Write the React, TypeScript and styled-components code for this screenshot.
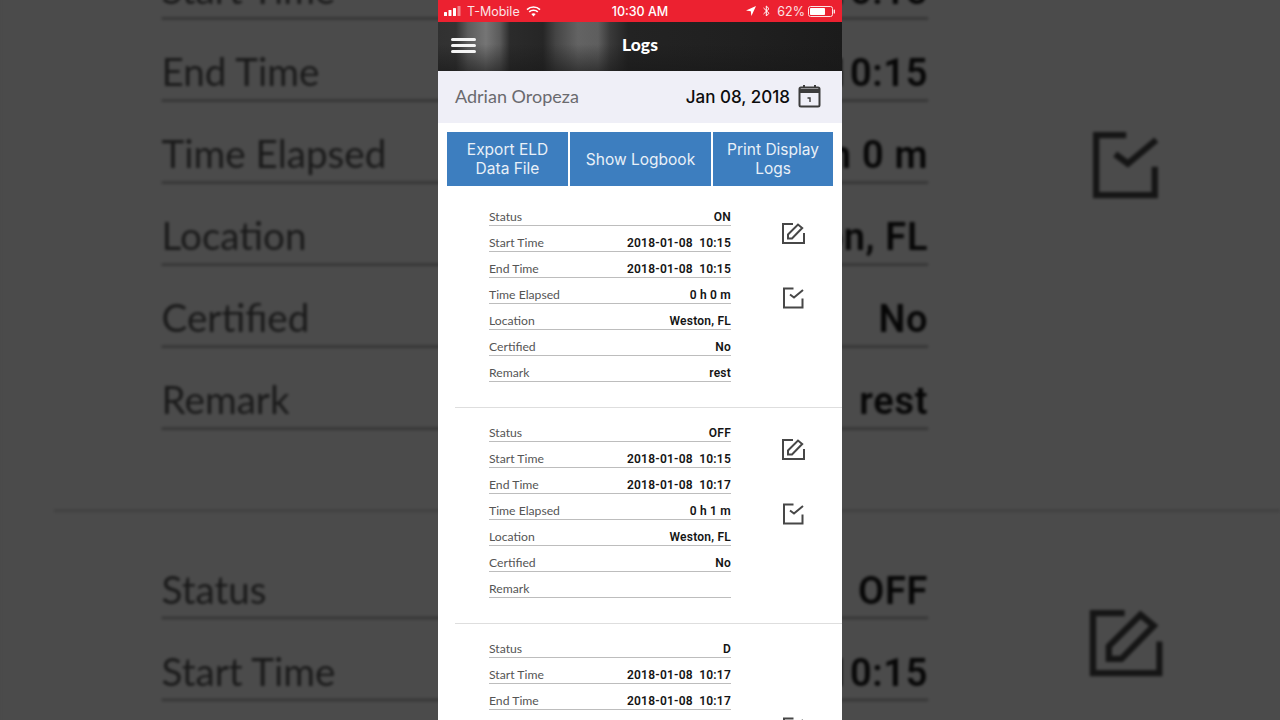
import React from "react";
import styled, { createGlobalStyle } from "styled-components";

const Global = createGlobalStyle`
  html, body { margin: 0; padding: 0; background: #fff; }
  body { width: 1280px; height: 720px; overflow: hidden; }
`;

const Stage = styled.div`
  position: relative;
  width: 1280px;
  height: 720px;
  overflow: hidden;
  display: flex;
  justify-content: center;
  background: #4b4b4b;
`;

const Backdrop = styled.div`
  position: absolute;
  left: 0;
  top: 0;
  width: 404px;
  transform-origin: 0 0;
  transform: translateY(-775px) scale(3.168, 3.155);
  filter: brightness(0.295) blur(0.45px);
`;

const Phone = styled.div`
  position: relative;
  width: 404px;
  height: 720px;
  overflow: hidden;
  background: #fff;
`;

const Screen = styled.div`
  width: 404px;
  display: flex;
  flex-direction: column;
  background: #fff;
`;

const StatusBar = styled.div`
  height: 22px;
  background: #ec2130;
  display: grid;
  grid-template-columns: 1fr auto 1fr;
  align-items: center;
  padding: 0 6px;
  box-sizing: border-box;
  color: #fbe3e5;
  font: 400 12.5px Inter, Roboto, sans-serif;
`;

const StatusLeft = styled.div`
  display: flex;
  align-items: center;
  gap: 6px;
`;

const StatusRight = styled.div`
  display: flex;
  align-items: center;
  justify-content: flex-end;
  gap: 7px;
`;

const Clock = styled.span`
  color: #fff;
  font-weight: 500;
`;

const Percent = styled.span`
  margin-right: -4px;
`;

const Header = styled.header`
  height: 49px;
  display: grid;
  grid-template-columns: 1fr auto 1fr;
  align-items: center;
  padding: 0 13px 3px;
  box-sizing: border-box;
  color: #fff;
  background:
    linear-gradient(180deg, rgba(28, 28, 28, 0) 45%, rgba(24, 24, 24, 0.6) 100%),
    linear-gradient(
      90deg,
      #313131 0,
      #333 18px,
      #5c5c5c 30px,
      #757575 48px,
      #5a5a5a 62px,
      #2b2b2b 72px,
      #262626 105px,
      #454545 118px,
      #636363 140px,
      #5e5e5e 160px,
      #3a3a3a 172px,
      #232323 190px,
      #202020 300px,
      #1b1b1b 404px
    );
`;

const Hamburger = styled.div`
  width: 25px;
  display: flex;
  flex-direction: column;
  gap: 3px;
`;

const HamburgerBar = styled.span`
  height: 3px;
  border-radius: 1.5px;
  background: #f4f4f4;
`;

const Title = styled.h1`
  margin: 0;
  padding-bottom: 2px;
  font: 900 17.5px Lato, sans-serif;
`;

const DateBar = styled.div`
  height: 52px;
  background: #efeff7;
  display: flex;
  align-items: center;
  justify-content: space-between;
  padding: 0 21px 2px 17px;
  box-sizing: border-box;
`;

const DriverName = styled.span`
  font: 400 18px Lato, sans-serif;
  color: #6a6a6e;
`;

const DateGroup = styled.div`
  display: flex;
  align-items: center;
  gap: 8px;
`;

const DateText = styled.span`
  padding-top: 2px;
  font: 500 17px Inter, sans-serif;
  color: #0c0c0c;
`;

const ButtonRow = styled.div`
  display: grid;
  grid-template-columns: 121px 141px 120px;
  gap: 2px;
  height: 54px;
  margin: 9px 9px 0;
`;

const ActionButton = styled.button`
  border: 0;
  padding: 0 10px;
  background: #3d7ebf;
  color: #e8f0f8;
  font: 400 15.5px/19px Inter, sans-serif;
  text-align: center;
`;

const Record = styled.section<{ $first?: boolean }>`
  display: flex;
  height: ${(p) => (p.$first ? "221px" : "215px")};
  box-sizing: border-box;
  padding: ${(p) => (p.$first ? "14px" : "8px")} 0 0 51px;
`;

const Divider = styled.hr`
  margin: 0 0 0 17px;
  height: 1px;
  border: 0;
  background: #dedede;
`;

const Rows = styled.div`
  flex: none;
  width: 242px;
  display: flex;
  flex-direction: column;
`;

const Row = styled.div`
  height: 26px;
  box-sizing: border-box;
  display: flex;
  align-items: baseline;
  justify-content: space-between;
  padding-top: 8.5px;
  border-bottom: 1.5px solid #bdbdbd;
`;

const Label = styled.span`
  font: 400 12.2px Lato, sans-serif;
  color: #555;
`;

const Value = styled.span`
  font: 600 12px Roboto, sans-serif;
  letter-spacing: 0.22px;
  color: #141414;
  white-space: pre;
`;

const IconColumn = styled.div<{ $tight?: boolean }>`
  width: 111px;
  box-sizing: border-box;
  display: flex;
  flex-direction: column;
  align-items: flex-start;
  gap: ${(p) => (p.$tight ? "39px" : "41px")};
  padding: 22px 0 0 50px;
`;

const ActionIcon = styled.svg<{ $hidden?: boolean }>`
  width: 24px;
  height: 24px;
  flex: none;
  fill: none;
  stroke: #474747;
  stroke-width: 2;
  visibility: ${(p) => (p.$hidden ? "hidden" : "visible")};
`;

const EditIcon = ({ hidden }: { hidden?: boolean }) => (
  <ActionIcon viewBox="0 0 24 24" $hidden={hidden}>
    <path d="M12 2H2V21H23V11" />
    <path d="M7 16.5V12.5L17 2.5L21.2 6L11 16.5Z" />
  </ActionIcon>
);

const CheckIcon = () => (
  <ActionIcon viewBox="0 0 24 24">
    <path d="M12.5 1.5H3V20.5H21.5V11.5" />
    <path d="M9 7.5L13 10.5L22 3" />
  </ActionIcon>
);

const Signal = () => (
  <svg width="17" height="10" viewBox="0 0 17 10">
    <rect x="0" y="6" width="3" height="4" rx="0.5" fill="#fff" />
    <rect x="4.5" y="4" width="3" height="6" rx="0.5" fill="#fff" />
    <rect x="9" y="2" width="3" height="8" rx="0.5" fill="#fff" />
    <rect x="13.5" y="0" width="3" height="10" rx="0.5" fill="#fff" opacity="0.45" />
  </svg>
);

const Wifi = () => (
  <svg width="15" height="11" viewBox="0 0 15 11" fill="none" stroke="#fff" strokeWidth="1.6">
    <path d="M1 3.6C4.6 .2 10.4 .2 14 3.6" />
    <path d="M3.2 5.9C5.6 3.7 9.4 3.7 11.8 5.9" />
    <path d="M7.5 10.4L5.3 8.1C6.5 7.1 8.5 7.1 9.7 8.1Z" fill="#fff" stroke="none" />
  </svg>
);

const LocationArrow = () => (
  <svg width="10" height="10" viewBox="0 0 10 10">
    <path d="M10 0L0 4.6L4.8 5.2L5.4 10Z" fill="#fff" />
  </svg>
);

const Bluetooth = () => (
  <svg width="7" height="12" viewBox="0 0 7 12" fill="none" stroke="#fff" strokeWidth="1">
    <path d="M.5 3L6 8.3L3.3 11V1L6 3.7L.5 9" />
  </svg>
);

const Battery = () => (
  <svg width="28" height="11" viewBox="0 0 28 11">
    <rect x="0.5" y="0.5" width="24" height="10" rx="2" fill="none" stroke="#fbe3e5" />
    <rect x="2" y="2" width="15" height="7" rx="0.8" fill="#fff" />
    <rect x="25.6" y="3.5" width="1.4" height="4" rx="0.6" fill="#fbe3e5" />
  </svg>
);

const CalendarIcon = () => (
  <svg width="23" height="24" viewBox="0 0 23 24" fill="none">
    <rect x="1.5" y="3.5" width="20" height="19" rx="1.5" stroke="#3c3c3c" strokeWidth="2" />
    <path d="M1.5 5H21.5V9H1.5Z" fill="#3c3c3c" />
    <path d="M6 1V4M17 1V4" stroke="#3c3c3c" strokeWidth="2" />
    <path d="M9.5 14H12V18" stroke="#3c3c3c" strokeWidth="1.4" />
  </svg>
);

type LogRow = [string, string];
type LogRecord = { rows: LogRow[]; editable: boolean };

const records: LogRecord[] = [
  {
    editable: true,
    rows: [
      ["Status", "ON"],
      ["Start Time", "2018-01-08  10:15"],
      ["End Time", "2018-01-08  10:15"],
      ["Time Elapsed", "0 h 0 m"],
      ["Location", "Weston, FL"],
      ["Certified", "No"],
      ["Remark", "rest"],
    ],
  },
  {
    editable: true,
    rows: [
      ["Status", "OFF"],
      ["Start Time", "2018-01-08  10:15"],
      ["End Time", "2018-01-08  10:17"],
      ["Time Elapsed", "0 h 1 m"],
      ["Location", "Weston, FL"],
      ["Certified", "No"],
      ["Remark", ""],
    ],
  },
  {
    editable: false,
    rows: [
      ["Status", "D"],
      ["Start Time", "2018-01-08  10:17"],
      ["End Time", "2018-01-08  10:17"],
    ],
  },
];

const LogContent = () => (
  <Screen>
    <StatusBar>
      <StatusLeft>
        <Signal />
        <span>T-Mobile</span>
        <Wifi />
      </StatusLeft>
      <Clock>10:30 AM</Clock>
      <StatusRight>
        <LocationArrow />
        <Bluetooth />
        <Percent>62%</Percent>
        <Battery />
      </StatusRight>
    </StatusBar>
    <Header>
      <Hamburger>
        <HamburgerBar />
        <HamburgerBar />
        <HamburgerBar />
      </Hamburger>
      <Title>Logs</Title>
    </Header>
    <DateBar>
      <DriverName>Adrian Oropeza</DriverName>
      <DateGroup>
        <DateText>Jan 08, 2018</DateText>
        <CalendarIcon />
      </DateGroup>
    </DateBar>
    <ButtonRow>
      <ActionButton>Export ELD Data File</ActionButton>
      <ActionButton>Show Logbook</ActionButton>
      <ActionButton>Print Display Logs</ActionButton>
    </ButtonRow>
    {records.map((record, i) => (
      <React.Fragment key={i}>
        {i > 0 && <Divider />}
        <Record $first={i === 0}>
          <Rows>
            {record.rows.map(([label, value]) => (
              <Row key={label}>
                <Label>{label}</Label>
                <Value>{value}</Value>
              </Row>
            ))}
          </Rows>
          <IconColumn $tight={!record.editable}>
            <EditIcon hidden={!record.editable} />
            <CheckIcon />
          </IconColumn>
        </Record>
      </React.Fragment>
    ))}
  </Screen>
);

export default function App() {
  return (
    <Stage>
      <Global />
      <Backdrop aria-hidden="true">
        <LogContent />
      </Backdrop>
      <Phone>
        <LogContent />
      </Phone>
    </Stage>
  );
}
